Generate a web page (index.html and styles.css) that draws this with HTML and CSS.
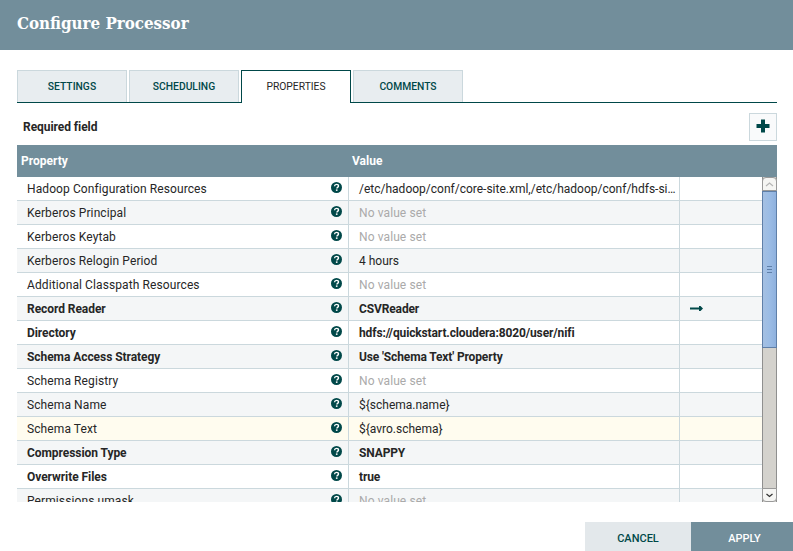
FILE: index.html
```html
<!DOCTYPE html>
<html lang="en">
<head>
<meta charset="utf-8">
<title>Configure Processor</title>
<link rel="stylesheet" href="styles.css">
</head>
<body>
<header class="dialog-header">Configure Processor</header>
<main class="dialog-body">
  <nav class="tabs">
    <div class="tab">SETTINGS</div>
    <div class="tab">SCHEDULING</div>
    <div class="tab tab-active">PROPERTIES</div>
    <div class="tab">COMMENTS</div>
  </nav>
  <div class="toolbar">
    <span class="required">Required field</span>
    <button class="add-btn" aria-label="Add property">
      <svg width="14" height="14" viewBox="0 0 14 14"><path d="M5 .5h4v4.5h4.5v4H9v4.5H5V9H.5V5H5z" fill="#004849"/></svg>
    </button>
  </div>
  <div class="grid">
    <div class="grid-head">
      <div class="head-prop">Property</div>
      <div class="head-val">Value</div>
    </div>
    <div class="grid-main">
      <div class="rows">
        <div class="row"><div class="c-name">Hadoop Configuration Resources<svg class="help"><use href="#q"/></svg></div><div class="c-val">/etc/hadoop/conf/core-site.xml,/etc/hadoop/conf/hdfs-site.xml</div><div class="c-act"></div></div>
        <div class="row"><div class="c-name">Kerberos Principal<svg class="help"><use href="#q"/></svg></div><div class="c-val unset">No value set</div><div class="c-act"></div></div>
        <div class="row"><div class="c-name">Kerberos Keytab<svg class="help"><use href="#q"/></svg></div><div class="c-val unset">No value set</div><div class="c-act"></div></div>
        <div class="row"><div class="c-name">Kerberos Relogin Period<svg class="help"><use href="#q"/></svg></div><div class="c-val">4 hours</div><div class="c-act"></div></div>
        <div class="row"><div class="c-name">Additional Classpath Resources<svg class="help"><use href="#q"/></svg></div><div class="c-val unset">No value set</div><div class="c-act"></div></div>
        <div class="row req"><div class="c-name">Record Reader<svg class="help"><use href="#q"/></svg></div><div class="c-val">CSVReader</div><div class="c-act"><svg class="goto" width="13" height="7" viewBox="0 0 13 7"><path d="M0 2.500h9V1h1.500L13 3.500 10.500 6H9V4.500H0z" fill="#004849"/></svg></div></div>
        <div class="row req"><div class="c-name">Directory<svg class="help"><use href="#q"/></svg></div><div class="c-val">hdfs://quickstart.cloudera:8020/user/nifi</div><div class="c-act"></div></div>
        <div class="row req"><div class="c-name">Schema Access Strategy<svg class="help"><use href="#q"/></svg></div><div class="c-val">Use 'Schema Text' Property</div><div class="c-act"></div></div>
        <div class="row"><div class="c-name">Schema Registry<svg class="help"><use href="#q"/></svg></div><div class="c-val unset">No value set</div><div class="c-act"></div></div>
        <div class="row"><div class="c-name">Schema Name<svg class="help"><use href="#q"/></svg></div><div class="c-val">${schema.name}</div><div class="c-act"></div></div>
        <div class="row hilite"><div class="c-name">Schema Text<svg class="help"><use href="#q"/></svg></div><div class="c-val">${avro.schema}</div><div class="c-act"></div></div>
        <div class="row req"><div class="c-name">Compression Type<svg class="help"><use href="#q"/></svg></div><div class="c-val">SNAPPY</div><div class="c-act"></div></div>
        <div class="row req"><div class="c-name">Overwrite Files<svg class="help"><use href="#q"/></svg></div><div class="c-val">true</div><div class="c-act"></div></div>
        <div class="row"><div class="c-name">Permissions umask<svg class="help"><use href="#q"/></svg></div><div class="c-val unset">No value set</div><div class="c-act"></div></div>
      </div>
      <div class="scrollbar">
        <div class="sb-btn sb-up"><svg width="9" height="5" viewBox="0 0 9 5"><path d="M1 4l3.500-3L8 4" fill="none" stroke="#b5b5b5" stroke-width="1.200"/></svg></div>
        <div class="sb-thumb"><span class="sb-grip"></span></div>
        <div class="sb-track"></div>
        <div class="sb-btn sb-down"><svg width="9" height="5" viewBox="0 0 9 5"><path d="M1.500 1l3 2.500L7.500 1" fill="none" stroke="#333" stroke-width="1.300"/></svg></div>
      </div>
    </div>
  </div>
  <footer class="actions">
    <button class="btn btn-cancel">CANCEL</button>
    <button class="btn btn-apply">APPLY</button>
  </footer>
</main>
<svg class="defs" width="0" height="0">
  <symbol id="q" viewBox="0 0 11 11">
    <circle cx="5.500" cy="5.500" r="5.500" fill="#004849"/>
    <path d="M3.500 4.300c.1-1.200 1-1.900 2-1.900 1.200 0 2 .7 2 1.700 0 1.300-1.600 1.300-1.600 2.300" fill="none" stroke="#fff" stroke-width="1.400"/>
    <rect x="4.900" y="7.400" width="1.600" height="1.500" fill="#fff"/>
  </symbol>
</svg>
</body>
</html>
```

FILE: styles.css
```css
* { box-sizing: border-box; }
html, body { margin: 0; padding: 0; }
body {
  width: 793px;
  height: 551px;
  overflow: hidden;
  background: #fff;
  font-family: Roboto, "Liberation Sans", sans-serif;
  font-size: 12px;
  color: #262626;
}
.defs { position: absolute; }
.dialog-header {
  height: 50px;
  padding: 0 17px;
  background: #728e9b;
  color: #fff;
  font-family: "DejaVu Serif Condensed", "DejaVu Serif", serif;
  font-stretch: condensed;
  font-weight: bold;
  font-size: 16.8px;
  line-height: 46px;
}
.dialog-body { padding: 20px 16px 0 17px; }
.tabs {
  display: flex;
  gap: 2px;
  height: 33px;
  border-bottom: 1px solid #004849;
}
.tab {
  width: 110px;
  height: 32px;
  background: #e8edf0;
  border: 1px solid #cbd8dd;
  border-bottom: 0;
  color: #004849;
  font-size: 10.3px;
  font-weight: 500;
  line-height: 31px;
  text-align: center;
}
.tab-active {
  height: 33px;
  background: #fff;
  border: 1px solid #004849;
  border-bottom: 0;
  color: #262626;
  font-weight: 400;
}
.toolbar {
  display: flex;
  justify-content: space-between;
  align-items: center;
  height: 28px;
  margin-top: 10px;
}
.required {
  margin-left: 6px;
  font-weight: 700;
  font-size: 12px;
  letter-spacing: -0.06px;
}
.add-btn {
  display: flex;
  align-items: center;
  justify-content: center;
  width: 28px;
  height: 28px;
  padding: 0 0 3px;
  background: #f9fafb;
  border: 1px solid #cbd8dd;
}
.grid { margin-top: 4px; }
.grid-head {
  display: flex;
  height: 32px;
  background: #728e9b;
  color: #fff;
  font-weight: 700;
  font-size: 12px;
  line-height: 32px;
}
.head-prop { width: 331px; padding-left: 4px; }
.head-val { padding-left: 4px; }
.grid-main {
  display: flex;
  height: 325px;
  overflow: hidden;
}
.rows { width: 745px; flex: none; }
.row {
  display: flex;
  height: 24px;
  line-height: 25px;
  letter-spacing: 0.1px;
  border-bottom: 1px solid #cbd8dd;
  background: #fff;
}
.row:nth-child(even) { background: #f4f6f7; }
.row.hilite { background: #fffcef; }
.req { font-weight: 700; letter-spacing: -0.06px; }
.c-name {
  position: relative;
  width: 332px;
  padding-left: 10px;
  border-right: 1px solid #cbd8dd;
  flex: none;
}
.help {
  position: absolute;
  right: 6px;
  top: 5px;
  width: 11px;
  height: 11px;
}
.c-val {
  width: 331px;
  flex: none;
  padding: 0 0 0 10px;
  letter-spacing: 0;
  border-right: 1px solid #cbd8dd;
  white-space: nowrap;
  overflow: hidden;
  text-overflow: ellipsis;
}
.req .c-val { letter-spacing: -0.13px; }
.c-val.unset { color: #aaa; font-weight: 400; letter-spacing: 0.1px; line-height: 24px; }
.c-act { flex: 1; padding-left: 10px; }
.goto { margin-top: 8px; display: block; }
.scrollbar {
  width: 15px;
  flex: none;
  display: flex;
  flex-direction: column;
  background: #d4d2cd;
  border-left: 1px solid #8f8f8f;
  border-right: 1px solid #8f8f8f;
}
.sb-btn {
  flex: none;
  display: flex;
  align-items: center;
  justify-content: center;
  background: #f5f5f3;
  border: 1px solid #999;
  margin: 0 -1px;
}
.sb-up { border-radius: 4px 4px 0 0; height: 14px; }
.sb-down { border-radius: 0 0 4px 4px; height: 14px; }
.sb-thumb {
  height: 157px;
  flex: none;
  margin: 0 -1px;
  display: flex;
  align-items: center;
  justify-content: center;
  background: linear-gradient(to right, #a5c0e2, #9bbce5 50%, #8fb1de);
  border: 1px solid #5f7fa8;
}
.sb-grip {
  width: 5px;
  height: 7px;
  border-top: 1px solid #5f7fa8;
  border-bottom: 1px solid #5f7fa8;
  background: linear-gradient(#5f7fa8, #5f7fa8) center / 100% 1px no-repeat;
}
.sb-track { flex: 1; }
.actions {
  display: flex;
  justify-content: flex-end;
  margin: 20px -16px 0 0;
}
.btn {
  width: 106px;
  height: 29px;
  padding: 3px 0 0;
  border: 0;
  font-family: Roboto, "Liberation Sans", sans-serif;
  font-size: 11px;
  font-weight: 500;
}
.btn-cancel { background: #e3e8eb; color: #004849; }
.btn-apply { width: 102px; padding-left: 5px; background: #728e9b; color: #fff; }
```
